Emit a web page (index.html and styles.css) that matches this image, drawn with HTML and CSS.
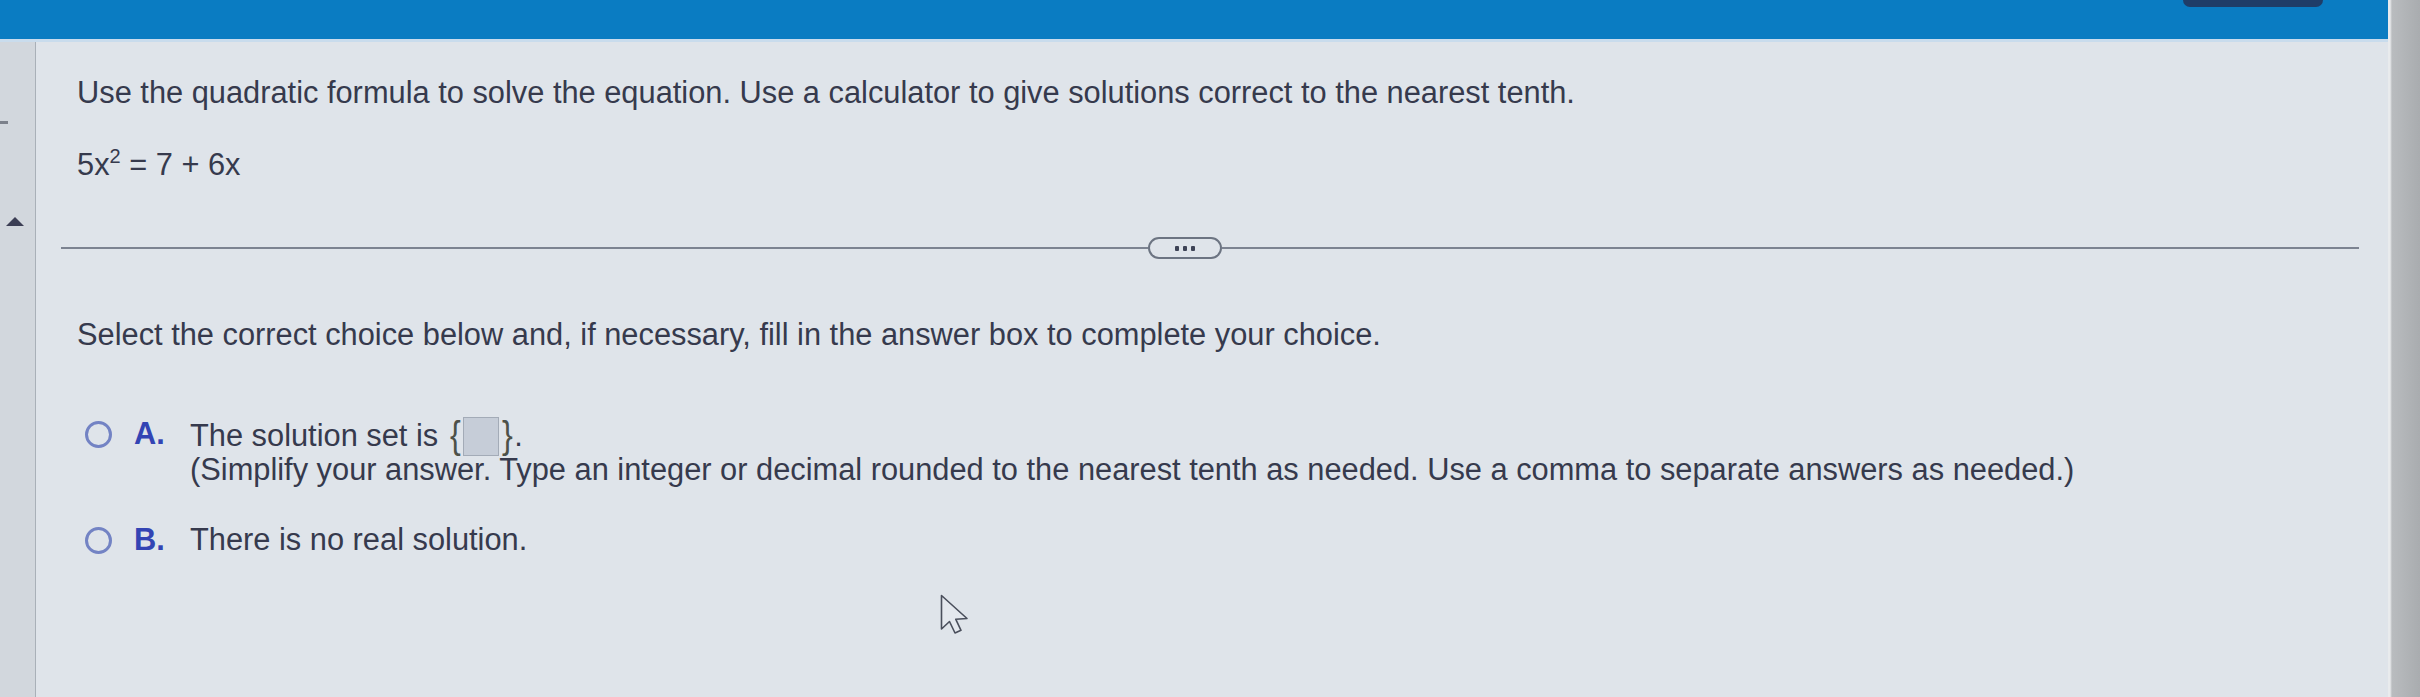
FILE: index.html
```html
<!DOCTYPE html>
<html>
<head>
<meta charset="utf-8">
<link rel="stylesheet" href="styles.css">
</head>
<body>
<div class="screen">
  <div class="main">
    <div class="topbar">
      <div class="tab"></div>
    </div>
    <div class="body">
      <div class="sidebar">
        <div class="dash"></div>
        <div class="tri"></div>
      </div>
      <div class="content">
        <p class="q">Use the quadratic formula to solve the equation. Use a calculator to give solutions correct to the nearest tenth.</p>
        <p class="eq">5x<sup>2</sup> = 7 + 6x</p>
        <div class="divider">
          <div class="rule"></div>
          <div class="pill"><span></span><span></span><span></span></div>
          <div class="rule"></div>
        </div>
        <p class="select">Select the correct choice below and, if necessary, fill in the answer box to complete your choice.</p>
        <div class="option opt-a">
          <span class="radio"></span>
          <span class="letter">A.</span>
          <div class="otext">
            <div class="line">The solution set is <span class="brace">{</span><span class="box"></span><span class="brace">}</span>.</div>
            <div class="line">(Simplify your answer. Type an integer or decimal rounded to the nearest tenth as needed. Use a comma to separate answers as needed.)</div>
          </div>
        </div>
        <div class="option opt-b">
          <span class="radio"></span>
          <span class="letter">B.</span>
          <div class="otext">
            <div class="line">There is no real solution.</div>
          </div>
        </div>
        <svg class="cursor" width="30" height="42" viewBox="0 0 30 42">
          <path d="M1.5 1.5 L1.5 35 L9.5 27.5 L15 39 L21 36.3 L15.7 25.2 L27 24.5 Z" fill="#e4e8ee" stroke="#4a4f5c" stroke-width="1.6" stroke-linejoin="round"/>
        </svg>
      </div>
    </div>
  </div>
  <div class="strip"></div>
</div>
</body>
</html>
```
FILE: styles.css
```css
html, body {
  margin: 0;
  padding: 0;
}
body {
  width: 2420px;
  height: 697px;
  overflow: hidden;
  background: #dde2e8;
  font-family: "Liberation Sans", Arial, sans-serif;
  color: #363a4d;
}
.screen {
  display: flex;
  width: 2420px;
  height: 697px;
}
.main {
  width: 2388px;
  display: flex;
  flex-direction: column;
}
.strip {
  flex: 1;
  background: linear-gradient(to right, #e9ebed 0, #e9ebed 2px, #b9bcbf 4px, #a9acaf 100%);
}
.topbar {
  height: 39px;
  background: #0a7cc2;
  border-bottom: 3px solid #c9dced;
  display: flex;
  justify-content: flex-end;
  padding-right: 65px;
}
.tab {
  width: 140px;
  height: 7px;
  background: #1f3d68;
  border-radius: 0 0 8px 8px;
}
.body {
  flex: 1;
  display: flex;
}
.sidebar {
  width: 35px;
  background: #d2d7dd;
  border-right: 1px solid #a9b0b8;
  display: flex;
  flex-direction: column;
  align-items: flex-start;
}
.dash {
  width: 8px;
  height: 3px;
  background: #7c818b;
  margin-top: 79px;
}
.tri {
  width: 0;
  height: 0;
  margin: 93px 0 0 6px;
  border-left: 9px solid transparent;
  border-right: 9px solid transparent;
  border-bottom: 9px solid #3c3f55;
}
.content {
  flex: 1;
  position: relative;
  padding: 34px 0 0 41px;
  background: #dfe4ea;
}
p {
  margin: 0;
}
.q, .eq, .select, .line {
  font-size: 30.8px;
  line-height: 34px;
  height: 34px;
  white-space: nowrap;
}
.eq {
  margin-top: 38px;
}
.eq sup {
  font-size: 20px;
  line-height: 0;
  vertical-align: 12px;
}
.divider {
  display: flex;
  align-items: center;
  margin: 54px 0 0 -16px;
  width: 2298px;
  height: 24px;
}
.rule {
  flex: 1;
  height: 2px;
  background: #7c8391;
}
.rule:first-child {
  flex: 0 0 1087px;
}
.pill {
  width: 70px;
  height: 18px;
  border: 2px solid #6c7482;
  border-radius: 11px;
  display: flex;
  justify-content: center;
  align-items: center;
  gap: 4px;
}
.pill span {
  width: 4px;
  height: 5px;
  background: #3e4356;
  border-radius: 1px;
}
.select {
  margin-top: 58px;
}
.option {
  display: flex;
  align-items: flex-start;
}
.opt-a {
  margin-top: 65px;
}
.opt-b {
  margin-top: 36px;
}
.radio {
  width: 21px;
  height: 21px;
  border: 3px solid #7383c4;
  border-radius: 50%;
  margin: 4px 0 0 8px;
  flex: none;
}
.letter {
  font-size: 30.8px;
  line-height: 34px;
  font-weight: bold;
  color: #3344b4;
  width: 56px;
  margin-left: 22px;
  flex: none;
}
.otext {
  display: flex;
  flex-direction: column;
  gap: 2px;
}
.brace {
  display: inline-block;
  font-size: 38px;
  line-height: 34px;
  color: #4d5149;
  transform: scaleX(0.85);
  vertical-align: -2px;
}
.brace:first-of-type {
  margin-left: 2px;
}
.box {
  display: inline-block;
  width: 34px;
  height: 37px;
  background: #c6cdd8;
  border: 1px solid #a3abb7;
  vertical-align: -10px;
  margin: 0 2px;
}
.cursor {
  position: absolute;
  left: 904px;
  top: 552px;
}
```
